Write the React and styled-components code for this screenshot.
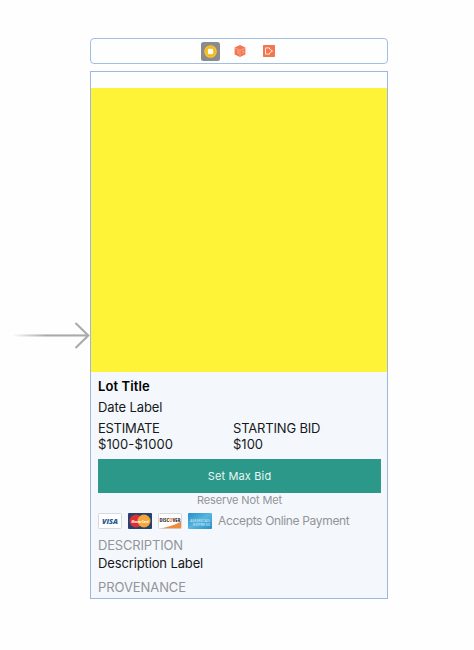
import React from 'react';
import styled, { createGlobalStyle } from 'styled-components';

const GlobalStyle = createGlobalStyle`
  body {
    margin: 0;
    background: #fefefe;
    font-family: Inter, "Liberation Sans", sans-serif;
  }
`

const Canvas = styled.div`
  box-sizing: border-box;
  width: 474px;
  height: 650px;
  padding-top: 38px;
  overflow: hidden;
`

const SceneDock = styled.div`
  box-sizing: border-box;
  display: flex;
  justify-content: center;
  align-items: center;
  gap: 13px;
  width: 298px;
  height: 26px;
  margin: 0 0 7px 90px;
  padding-left: 1px;
  border: 1px solid #9fc0e4;
  border-radius: 4px;
`

const DockIcon = styled.svg`
  display: block;
  flex: none;
`

const Scene = styled.div`
  display: flex;
  align-items: flex-start;
`

const EntryArrow = styled.svg`
  flex: none;
  margin-top: 249px;
`

const Screen = styled.div`
  box-sizing: border-box;
  width: 298px;
  height: 528px;
  border: 1px solid #9bb9de;
  background: #f4f8fd;
`

const StatusBar = styled.div`
  height: 16px;
  background: #fefefe;
`

const LotImage = styled.div`
  height: 284px;
  background: #fff338;
`

const Details = styled.div`
  padding: 6px 6px 0 7px;
`

const Label = styled.div`
  height: 16px;
  margin-top: ${props => props.$top || 0}px;
  color: ${props => (props.$muted ? '#929499' : '#16181b')};
  font-size: ${props => props.$size || 13}px;
  font-weight: 400;
  letter-spacing: ${props => props.$spacing || 0}px;
  line-height: 16px;
  white-space: nowrap;
`

const Title = styled(Label)`
  color: #000;
  font-weight: 600;
`

const Reserve = styled(Label)`
  line-height: 15px;
  text-align: center;
`

const Bids = styled.div`
  display: grid;
  grid-template-columns: 135px 1fr;
  margin-top: 5px;
`

const BidButton = styled.button`
  display: block;
  width: 100%;
  height: 34px;
  margin-top: 7px;
  padding: 0;
  border: 0;
  background: #2b988a;
  color: #e9f6f4;
  font-family: inherit;
  font-size: 11px;
  letter-spacing: 0.15px;
`

const Payment = styled.div`
  display: flex;
  align-items: center;
  gap: 6px;
  height: 16px;
  margin-top: 4px;
`

const Card = styled.svg`
  display: block;
  flex: none;
  overflow: visible;
`

const Visa = () => (
  <Card width="24" height="16" viewBox="0 0 24 16">
    <rect x="0.5" y="0.5" width="23" height="15" rx="1" fill="#fff" stroke="#d5d9df" />
    <text x="12" y="11" textAnchor="middle" textLength="16" lengthAdjust="spacingAndGlyphs"
      fontFamily="Open Sans, sans-serif" fontSize="7.5" fontWeight="800" fontStyle="italic" fill="#28588f">VISA</text>
  </Card>
)

const MasterCard = () => (
  <Card width="24" height="16" viewBox="0 0 24 16">
    <rect width="24" height="16" rx="1" fill="#24416f" />
    <circle cx="8" cy="8" r="6.5" fill="#df3031" />
    <circle cx="16" cy="8" r="6.5" fill="#f5a638" />
    <text x="12" y="9.6" textAnchor="middle" textLength="17" lengthAdjust="spacingAndGlyphs"
      fontFamily="Open Sans, sans-serif" fontSize="4.2" fontWeight="700" fontStyle="italic" fill="#fff">MasterCard</text>
  </Card>
)

const Discover = () => (
  <Card width="24" height="16" viewBox="0 0 24 16">
    <rect x="0.5" y="0.5" width="23" height="15" rx="1" fill="#fff" stroke="#d5d9df" />
    <path d="M23 8.5 Q16 12.5 4 15.3 H23Z" fill="#ef8c3c" />
    <text x="12" y="8.6" textAnchor="middle" textLength="21" lengthAdjust="spacingAndGlyphs"
      fontFamily="Open Sans, sans-serif" fontSize="4.6" fontWeight="800" fill="#4a403e">
      DISC<tspan fill="#ef8c3c">O</tspan>VER
    </text>
  </Card>
)

const Amex = () => (
  <Card width="24" height="16" viewBox="0 0 24 16">
    <defs>
      <linearGradient id="amex" x1="0" y1="0" x2="1" y2="1">
        <stop offset="0" stopColor="#268fc7" />
        <stop offset="0.5" stopColor="#58b5df" />
        <stop offset="1" stopColor="#268fc7" />
      </linearGradient>
    </defs>
    <rect width="24" height="16" rx="1" fill="url(#amex)" />
    <g fontFamily="Open Sans, sans-serif" fontSize="4.2" fontWeight="600" fill="#b9e1f3">
      <text x="2" y="8.5" textLength="20" lengthAdjust="spacingAndGlyphs">AMERICAN</text>
      <text x="5" y="13" textLength="17" lengthAdjust="spacingAndGlyphs">EXPRESS</text>
    </g>
  </Card>
)

const App = () => (
  <Canvas>
    <GlobalStyle />
    <SceneDock>
      <DockIcon width="19" height="19" viewBox="0 0 19 19">
        <rect width="19" height="19" rx="2.5" fill="#8b8b8e" />
        <circle cx="9.5" cy="9.5" r="6.3" fill="#f8c62f" />
        <circle cx="9.5" cy="9.5" r="4.5" fill="none" stroke="#eeb11f" />
        <rect x="7" y="7" width="5" height="5" rx="0.7" fill="#fff" />
      </DockIcon>
      <DockIcon width="14" height="14" viewBox="0 0 14 14">
        <path d="M7 1 12.4 3.4V10.4L7 13 1.6 10.4V3.4Z" fill="#f27650" />
        <path d="M2 4.2 7 6.3 12 4.2M7 6.3V12.5" fill="none" stroke="#fbb8a1" strokeWidth="0.7" />
        <path d="M4 7.2 5.1 6.8V10M9 7.2H10.8V8.5L9.2 9.8" fill="none" stroke="#fbb8a1" strokeWidth="0.8" />
      </DockIcon>
      <DockIcon width="18" height="14" viewBox="0 0 18 14">
        <rect x="3" y="1" width="12" height="12" rx="0.8" fill="#f27650" />
        <path d="M9.5 5V3.9H5.5V10.1H9.5V9M9.5 5 12.5 7 9.5 9" fill="none" stroke="#ffe2d9" />
      </DockIcon>
    </SceneDock>
    <Scene>
      <EntryArrow width="90" height="32" viewBox="0 0 90 32">
        <defs>
          <linearGradient id="fade" x1="12" y1="0" x2="46" y2="0" gradientUnits="userSpaceOnUse">
            <stop offset="0" stopColor="#aaa" stopOpacity="0" />
            <stop offset="1" stopColor="#aaa" />
          </linearGradient>
        </defs>
        <rect x="12" y="14.4" width="76" height="2.1" fill="url(#fade)" />
        <path d="M75.5 3 88.3 15.5 75.5 28" fill="none" stroke="#aaa" strokeWidth="2.1" />
      </EntryArrow>
      <Screen>
        <StatusBar />
        <LotImage />
        <Details>
          <Title $spacing={0.1}>Lot Title</Title>
          <Label $top={5} $spacing={-0.1}>Date Label</Label>
          <Bids>
            <Label $spacing={-0.28}>ESTIMATE</Label>
            <Label $spacing={-0.18}>STARTING BID</Label>
            <Label $spacing={0.08}>$100-$1000</Label>
            <Label>$100</Label>
          </Bids>
          <BidButton>Set Max Bid</BidButton>
          <Reserve $muted $size={11} $spacing={-0.12}>Reserve Not Met</Reserve>
          <Payment>
            <Visa />
            <MasterCard />
            <Discover />
            <Amex />
            <Label $muted $size={12} $spacing={-0.34}>Accepts Online Payment</Label>
          </Payment>
          <Label $muted $top={8} $spacing={-0.18}>DESCRIPTION</Label>
          <Label $top={2} $spacing={-0.13}>Description Label</Label>
          <Label $muted $top={8} $spacing={-0.08}>PROVENANCE</Label>
        </Details>
      </Screen>
    </Scene>
  </Canvas>
);

export default App;
